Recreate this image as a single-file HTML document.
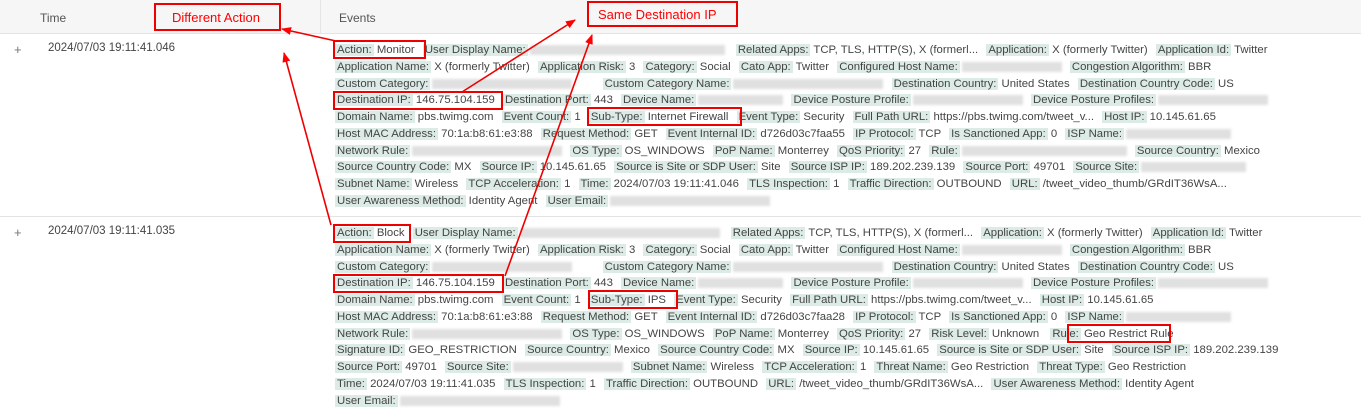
<!DOCTYPE html>
<html><head><meta charset="utf-8"><style>
*{margin:0;padding:0;box-sizing:border-box}
body{width:1361px;height:415px;overflow:hidden;background:#fff;font-family:"Liberation Sans",sans-serif;font-size:11.35px;color:#444;position:relative}
.hdr{position:absolute;left:0;top:0;width:1361px;height:34px;background:#f6f6f6;border-bottom:1px solid #e4e4e4}
.hdr .t{position:absolute;left:40px;top:11px;font-size:12px;color:#555}
.hdr .e{position:absolute;left:320px;top:0;height:34px;border-left:1px solid #e4e4e4;padding:11px 0 0 18px;font-size:12px;color:#555}
.row{position:absolute;left:0;width:1361px}
.plus{position:absolute;left:14px;font-size:13px;color:#777}
.time{position:absolute;left:48px;font-size:11.5px;color:#444}
.ev{position:absolute;left:335px}
.ln{height:16.75px;line-height:16.75px;white-space:nowrap}
b{font-weight:normal;background:#dcebe5;padding:0 2px;margin-left:5px}
.ln b:first-child{margin-left:0}
i{display:inline-block;height:10px;background:#d6d6d6;filter:blur(1.4px);vertical-align:middle;margin-left:2px;opacity:.75}
.sep{position:absolute;left:0;top:216px;width:1361px;border-top:1px solid #e4e4e4}
svg{position:absolute;left:0;top:0}
</style></head><body>
<div class="hdr"><div class="t">Time</div><div class="e">Events</div></div>

<div class="row" style="top:42px"><div class="plus">+</div><div class="time">2024/07/03 19:11:41.046</div>
<div class="ev">
<div class="ln"><b>Action:</b> Monitor <b>User Display Name:</b><i style="width:195px"></i> <b style="margin-left:8px">Related Apps:</b> TCP, TLS, HTTP(S), X (formerl... <b>Application:</b> X (formerly Twitter) <b>Application Id:</b> Twitter</div>
<div class="ln"><b>Application Name:</b> X (formerly Twitter) <b>Application Risk:</b> 3 <b>Category:</b> Social <b>Cato App:</b> Twitter <b>Configured Host Name:</b><i style="width:100px"></i> <b>Congestion Algorithm:</b> BBR</div>
<div class="ln"><b>Custom Category:</b><i style="width:140px"></i> &nbsp;&nbsp;&nbsp;&nbsp;&nbsp;&nbsp;&nbsp;<b>Custom Category Name:</b><i style="width:150px"></i> <b>Destination Country:</b> United States <b>Destination Country Code:</b> US</div>
<div class="ln"><b>Destination IP:</b> 146.75.104.159 <b>Destination Port:</b> 443 <b>Device Name:</b><i style="width:85px"></i> <b>Device Posture Profile:</b><i style="width:110px"></i> <b>Device Posture Profiles:</b><i style="width:110px"></i></div>
<div class="ln"><b>Domain Name:</b> pbs.twimg.com <b>Event Count:</b> 1 <b>Sub-Type:</b> Internet Firewall <b>Event Type:</b> Security <b>Full Path URL:</b> https://pbs.twimg.com/tweet_v... <b>Host IP:</b> 10.145.61.65</div>
<div class="ln"><b>Host MAC Address:</b> 70:1a:b8:61:e3:88 <b>Request Method:</b> GET <b>Event Internal ID:</b> d726d03c7faa55 <b>IP Protocol:</b> TCP <b>Is Sanctioned App:</b> 0 <b>ISP Name:</b><i style="width:105px"></i></div>
<div class="ln"><b>Network Rule:</b><i style="width:150px"></i> <b>OS Type:</b> OS_WINDOWS <b>PoP Name:</b> Monterrey <b>QoS Priority:</b> 27 <b>Rule:</b><i style="width:165px"></i> <b>Source Country:</b> Mexico</div>
<div class="ln"><b>Source Country Code:</b> MX <b>Source IP:</b> 10.145.61.65 <b>Source is Site or SDP User:</b> Site <b>Source ISP IP:</b> 189.202.239.139 <b>Source Port:</b> 49701 <b>Source Site:</b><i style="width:105px"></i></div>
<div class="ln"><b>Subnet Name:</b> Wireless <b>TCP Acceleration:</b> 1 <b>Time:</b> 2024/07/03 19:11:41.046 <b>TLS Inspection:</b> 1 <b>Traffic Direction:</b> OUTBOUND <b>URL:</b> /tweet_video_thumb/GRdIT36WsA...</div>
<div class="ln"><b>User Awareness Method:</b> Identity Agent <b>User Email:</b><i style="width:160px"></i></div>
</div></div>

<div class="sep"></div>

<div class="row" style="top:225px"><div class="plus">+</div><div class="time">2024/07/03 19:11:41.035</div>
<div class="ev">
<div class="ln"><b>Action:</b> Block <b>User Display Name:</b><i style="width:200px"></i> <b style="margin-left:8px">Related Apps:</b> TCP, TLS, HTTP(S), X (formerl... <b>Application:</b> X (formerly Twitter) <b>Application Id:</b> Twitter</div>
<div class="ln"><b>Application Name:</b> X (formerly Twitter) <b>Application Risk:</b> 3 <b>Category:</b> Social <b>Cato App:</b> Twitter <b>Configured Host Name:</b><i style="width:100px"></i> <b>Congestion Algorithm:</b> BBR</div>
<div class="ln"><b>Custom Category:</b><i style="width:140px"></i> &nbsp;&nbsp;&nbsp;&nbsp;&nbsp;&nbsp;&nbsp;<b>Custom Category Name:</b><i style="width:150px"></i> <b>Destination Country:</b> United States <b>Destination Country Code:</b> US</div>
<div class="ln"><b>Destination IP:</b> 146.75.104.159 <b>Destination Port:</b> 443 <b>Device Name:</b><i style="width:85px"></i> <b>Device Posture Profile:</b><i style="width:110px"></i> <b>Device Posture Profiles:</b><i style="width:110px"></i></div>
<div class="ln"><b>Domain Name:</b> pbs.twimg.com <b>Event Count:</b> 1 <b>Sub-Type:</b> IPS <b>Event Type:</b> Security <b>Full Path URL:</b> https://pbs.twimg.com/tweet_v... <b>Host IP:</b> 10.145.61.65</div>
<div class="ln"><b>Host MAC Address:</b> 70:1a:b8:61:e3:88 <b>Request Method:</b> GET <b>Event Internal ID:</b> d726d03c7faa28 <b>IP Protocol:</b> TCP <b>Is Sanctioned App:</b> 0 <b>ISP Name:</b><i style="width:105px"></i></div>
<div class="ln"><b>Network Rule:</b><i style="width:150px"></i> <b>OS Type:</b> OS_WINDOWS <b>PoP Name:</b> Monterrey <b>QoS Priority:</b> 27 <b>Risk Level:</b> Unknown <b style="margin-left:8px">Rule:</b> Geo Restrict Rule</div>
<div class="ln"><b>Signature ID:</b> GEO_RESTRICTION <b>Source Country:</b> Mexico <b>Source Country Code:</b> MX <b>Source IP:</b> 10.145.61.65 <b>Source is Site or SDP User:</b> Site <b>Source ISP IP:</b> 189.202.239.139</div>
<div class="ln"><b>Source Port:</b> 49701 <b>Source Site:</b><i style="width:110px"></i> <b>Subnet Name:</b> Wireless <b>TCP Acceleration:</b> 1 <b>Threat Name:</b> Geo Restriction <b>Threat Type:</b> Geo Restriction</div>
<div class="ln"><b>Time:</b> 2024/07/03 19:11:41.035 <b>TLS Inspection:</b> 1 <b>Traffic Direction:</b> OUTBOUND <b>URL:</b> /tweet_video_thumb/GRdIT36WsA... <b>User Awareness Method:</b> Identity Agent</div>
<div class="ln"><b>User Email:</b><i style="width:160px"></i></div>
</div></div>

<svg width="1361" height="415" viewBox="0 0 1361 415">
<defs><marker id="a" markerWidth="10" markerHeight="8" refX="9" refY="4" orient="auto" markerUnits="userSpaceOnUse"><path d="M0,0 L10,4 L0,8 z" fill="#f00"/></marker></defs>
<g fill="none" stroke="#e00" stroke-width="2">
<rect x="155" y="4" width="125" height="26"/>
<rect x="588" y="2" width="149" height="24"/>
<rect x="334" y="41" width="91" height="17"/>
<rect x="334" y="92" width="168" height="17"/>
<rect x="588" y="108" width="153" height="17"/>
<rect x="334" y="225" width="76" height="17"/>
<rect x="334" y="275" width="169" height="17"/>
<rect x="589" y="291" width="88" height="17"/>
<rect x="1068" y="325" width="102" height="17"/>
<g stroke-width="1.6">
<line x1="336" y1="41" x2="282" y2="29" marker-end="url(#a)"/>
<line x1="331" y1="225" x2="284" y2="53" marker-end="url(#a)"/>
<line x1="462" y1="92" x2="575" y2="20" marker-end="url(#a)"/>
<line x1="505" y1="276" x2="592" y2="35" marker-end="url(#a)"/>
</g></g>
<text x="172" y="22" fill="#f00" font-family="Liberation Sans" font-size="13">Different Action</text>
<text x="598" y="19" fill="#f00" font-family="Liberation Sans" font-size="13">Same Destination IP</text>
</svg>
</body></html>
